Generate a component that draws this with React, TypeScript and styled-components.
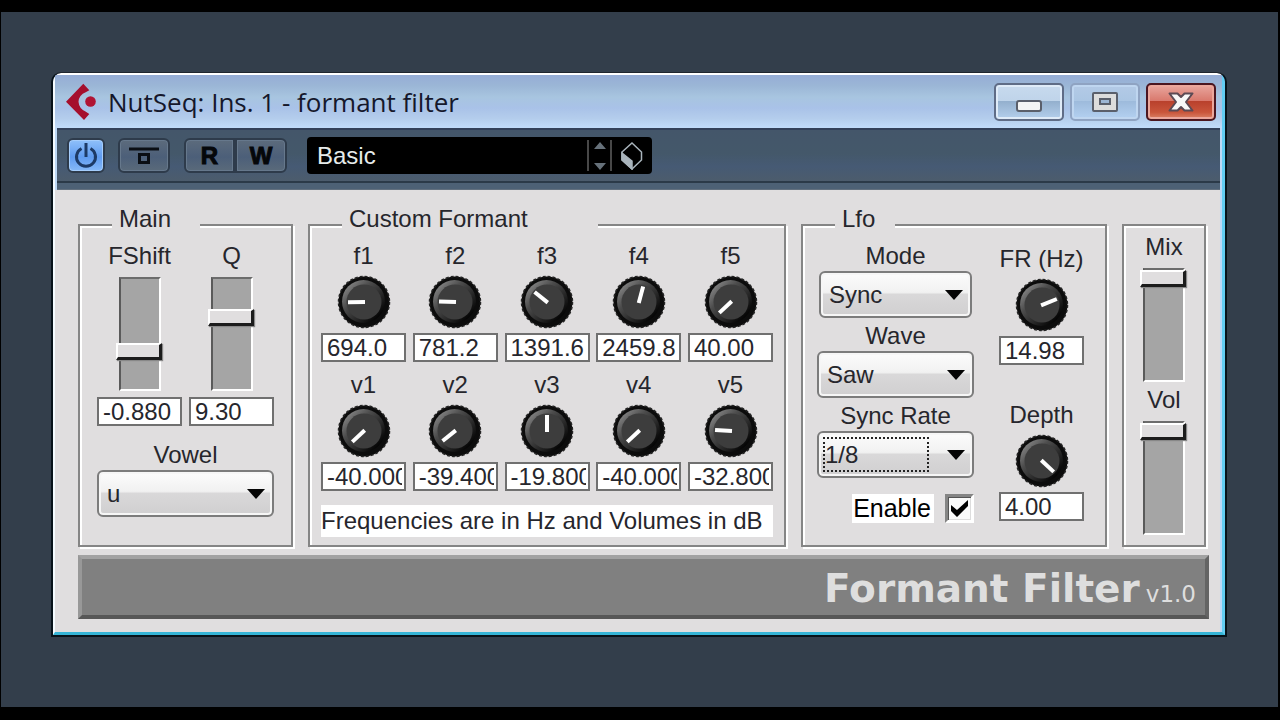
import React, { useId, useState } from "react";
import styled, { createGlobalStyle, css } from "styled-components";

const face = "#e0dedf";
const ink = "#26262c";
const sans = `"Liberation Sans", Arial, sans-serif`;

const GlobalStyle = createGlobalStyle`
  * { box-sizing: border-box; }
  body { margin: 0; background: #000; font-family: ${sans}; font-size: 24px; color: ${ink}; }
  button, input, select { font: inherit; color: inherit; }
`;

const Desktop = styled.main`
  min-height: 100vh;
  padding: 60px 51px 24px 50px;
  border: solid #000;
  border-width: 12px 2px 13px 1px;
  background: #333e4b;
`;

const Window = styled.section`
  border: 2px solid #07121a;
  border-top: 1px solid #20262e;
  border-radius: 10px 10px 0 0;
  overflow: hidden;
`;

const Frame = styled.div`
  padding: 0 2px;
  border: solid;
  border-width: 2px 3px 3px 2px;
  border-color: #fff #62cdf3 #35b4d6 #f4fbff;
  border-radius: 8px 8px 0 0;
  background: #bcd8f6;
`;

const TitleBar = styled.header`
  display: flex;
  align-items: center;
  height: 53px;
  margin: 0 -2px;
  padding: 0 6px 0 9px;
  background: linear-gradient(#96add6 0, #9bb6d6 20%, #a8c5e0 42%, #a9c2e8 62%, #b4cdec 82%, #c1dcfb 100%);
`;

const Title = styled.h1`
  flex: 1;
  margin: 0 0 0 10px;
  font: 400 26px/32px "Open Sans", "Noto Sans", sans-serif;
  color: #15172b;
`;

const WindowButtons = styled.div`
  display: flex;
  gap: 6px;
`;

const looks = {
  normal: css`
    border-color: #5f6c86;
    background: linear-gradient(#c8daee 0, #bfd4ea 46%, #93afcd 47%, #b4cfec 100%);
    box-shadow: inset 0 0 0 2px #dfebf8;
  `,
  dim: css`
    border-color: #8fa3c2;
    background: linear-gradient(#b4cae6 0, #abc6e3 46%, #9dbadb 47%, #b4d1f1 100%);
    box-shadow: inset 0 0 0 2px #bfd6f0;
  `,
  close: css`
    border-color: #4b1620;
    background: linear-gradient(#e9a79f 0, #d9796d 46%, #b8402c 47%, #c9553b 80%, #dc8468 100%);
    box-shadow: inset 0 0 0 2px #eba79c;
  `,
};

const WindowButton = styled.button<{ $look: keyof typeof looks }>`
  display: grid;
  place-items: center;
  width: 70px;
  height: 38px;
  padding: 0;
  border: 2px solid;
  border-radius: 5px;
  ${(p) => looks[p.$look]}
`;

const Toolbar = styled.div`
  display: flex;
  align-items: center;
  height: 62px;
  padding: 0 11px 8px 10px;
  border-top: 2px solid #33415a;
  border-bottom: 1px solid #62707e;
  background: linear-gradient(#44566a 0, #44586a 40%, #465a74 62%, #4c5c6c 51px, #2b3a48 51px, #2b3a48 53px, #4d6175 53px);
`;

const ToolButton = styled.button<{ $width: number; $lit?: boolean; $side?: "left" | "right" }>`
  display: grid;
  place-items: center;
  width: ${(p) => p.$width}px;
  height: 35px;
  padding: 0;
  border: 2px solid #2e3b4b;
  border-radius: ${(p) => (p.$side === "left" ? "6px 0 0 6px" : p.$side === "right" ? "0 6px 6px 0" : "6px")};
  background: ${(p) => (p.$lit ? "linear-gradient(#8fc0fa, #5f9bf0 55%, #86b9f8)" : "linear-gradient(#5c6b7c, #4c5f79 55%, #5a6a7a)")};
  box-shadow: inset 0 0 0 1px ${(p) => (p.$lit ? "#a5cdfc" : "#66788c")};
  font: 700 24px/24px ${sans};
  -webkit-text-stroke: 1px #05070a;
  color: #05070a;
`;

const ToolSet = styled.div`
  display: flex;
  margin: 0 20px 0 14px;
`;

const Bypass = styled(ToolButton)`
  margin-left: 13px;
`;

const Preset = styled.div`
  display: flex;
  align-items: center;
  width: 345px;
  height: 37px;
  padding: 3px 1px 3px 10px;
  border-radius: 4px;
  background: #000;
`;

const PresetName = styled.input`
  flex: 1;
  min-width: 0;
  padding: 0;
  border: 0;
  background: none;
  color: #e6ebea;
`;

const PresetButton = styled.button<{ $width: number }>`
  display: grid;
  place-items: center;
  width: ${(p) => p.$width}px;
  height: 31px;
  padding: 0;
  border: 0;
  border-left: 2px solid #484848;
  background: none;
`;

const Panel = styled.div`
  margin: 0 0 0 -2px;
  padding: 21px 11px 13px 23px;
  background: ${face};
`;

const Groups = styled.div`
  display: grid;
  grid-template-columns: 215fr 478fr 306fr 84fr;
  gap: 15px;
  margin-right: 3px;
`;

const Group = styled.fieldset<{ $bare?: boolean }>`
  min-width: 0;
  margin: ${(p) => (p.$bare ? "13px 0 0" : "0")};
  padding: ${(p) => (p.$bare ? "9px 0 4px" : "5px 0 8px")};
  border: 2px solid #858585;
  box-shadow: 2px 2px 0 #fff, inset 2px 2px 0 #fff;
`;

const Legend = styled.legend<{ $width: number }>`
  width: ${(p) => p.$width}px;
  height: 28px;
  margin-left: 32px;
  padding: 0 0 12px 7px;
  background: ${face};
  line-height: 16px;
  white-space: nowrap;
`;

const Caption = styled.label`
  display: block;
  line-height: 24px;
  text-align: center;
`;

const Stack = styled.div`
  display: flex;
  flex-direction: column;
  align-items: center;
`;

const MainArea = styled.div`
  padding: 0 17px;
`;

const Pair = styled.div`
  display: flex;
  justify-content: center;
  gap: 7px;
  margin-bottom: 17px;
`;

const ValueBox = styled.input`
  display: block;
  width: 85px;
  height: 29px;
  padding: 0 2px 0 4px;
  border: 2px solid #707070;
  border-radius: 0;
  background: #fff;
`;

const Slider = styled.input.attrs({ type: "range", min: 0, max: 100 })`
  appearance: none;
  writing-mode: vertical-lr;
  direction: rtl;
  width: 42px;
  height: 114px;
  margin: 9px 0 6px;
  border: 2px solid;
  border-color: #6c6c6c #fff #fff #5a5a5a;
  background: #a5a5a5;

  &::-webkit-slider-thumb {
    appearance: none;
    width: 46px;
    height: 17px;
    margin-left: -2px;
    border: solid;
    border-width: 2px 3px 3px 2px;
    border-color: #fff #1c1c1c #1c1c1c #fff;
    background: ${face};
    box-shadow: 1px 1px 1px #888;
  }
`;

const KnobFrame = styled.div`
  position: relative;
  width: 54px;
  height: 54px;
  margin: 7px 0 4px;
`;

const KnobInput = styled.input`
  position: absolute;
  inset: 0;
  width: 100%;
  height: 100%;
  margin: 0;
  opacity: 0;
`;

const KnobGrid = styled.div`
  display: grid;
  grid-template-columns: repeat(5, 85px);
  justify-content: space-between;
  row-gap: 11px;
  padding: 0 11px;
`;

const Note = styled.p`
  margin: 14px 11px 0;
  background: #fff;
  line-height: 32px;
  white-space: nowrap;
`;

const LfoArea = styled.div`
  display: flex;
  justify-content: space-between;
  padding: 0 21px 0 14px;
`;

const LfoSelects = styled.div`
  display: flex;
  flex-direction: column;
  gap: 6px;
  width: 157px;
`;

const LfoKnobs = styled.div`
  display: flex;
  flex-direction: column;
  gap: 38px;
  padding-top: 3px;
`;

const SelectFrame = styled.div<{ $inset?: boolean }>`
  position: relative;
  margin: 3px ${(p) => (p.$inset ? 2 : 0)}px 0;
`;

const SelectBox = styled.select<{ $tight?: boolean }>`
  appearance: none;
  display: block;
  width: 100%;
  height: 47px;
  padding: 0 44px 0 ${(p) => (p.$tight ? 6 : 8)}px;
  border: 2px solid #7c7c7c;
  border-radius: 6px;
  background: linear-gradient(#fcfcfc 0, #f1f1f1 45%, #d9d8d9 50%, #d0cfd0 100%);
  box-shadow: inset 0 0 0 2px #f6f6f6;
`;

const Arrow = styled.svg`
  position: absolute;
  top: 18px;
  right: 9px;
  pointer-events: none;
`;

const FocusMark = styled.span`
  position: absolute;
  inset: 6px 45px 6px 6px;
  border: 2px dotted #222;
  pointer-events: none;
`;

const EnableRow = styled.div`
  display: flex;
  justify-content: flex-end;
  align-items: center;
  gap: 11px;
  margin-top: 10px;
`;

const EnableLabel = styled.label`
  padding: 0 3px 0 1px;
  background: #fff;
  font-size: 25px;
  line-height: 29px;
  color: #000;
`;

const TickFrame = styled.span`
  position: relative;
  display: block;
  width: 29px;
  height: 29px;
`;

const Tick = styled.input`
  appearance: none;
  display: block;
  width: 29px;
  height: 29px;
  margin: 0;
  border: 3px solid;
  border-color: #858585 #fff #fff #858585;
  background: #fafafa;
  box-shadow: inset 1px 1px 0 #555, inset -1px -1px 0 #ddd;

  & + svg { display: none; }
  &:checked + svg { display: block; }
`;

const TickMark = styled.svg`
  position: absolute;
  inset: 0;
  pointer-events: none;
`;

const Banner = styled.footer`
  display: flex;
  justify-content: flex-end;
  align-items: baseline;
  gap: 6px;
  height: 64px;
  margin-top: 8px;
  padding: 0 9px;
  border: 4px solid;
  border-color: #a2a2a2 #646464 #575757 #989898;
  background: #808080;
  color: #dedede;
  font: 400 23px/60px "DejaVu Sans", Verdana, sans-serif;
`;

const Product = styled.strong`
  font-size: 39px;
  font-weight: 700;
`;

function Knob({ name, value, angle }: { name: string; value: string; angle: number }) {
  const id = useId();
  const [turn, setTurn] = useState(angle);
  return (
    <Stack>
      <Caption htmlFor={id}>{name}</Caption>
      <KnobFrame>
        <svg width="54" height="54" viewBox="0 0 54 54" aria-hidden="true">
          <defs>
            <linearGradient id={`${id}rim`} x1="0.15" y1="0.15" x2="0.85" y2="0.85">
              <stop offset="0" stopColor="#7c7c7c" />
              <stop offset="0.3" stopColor="#4c4c4c" />
              <stop offset="0.65" stopColor="#2a2a2a" />
              <stop offset="1" stopColor="#050505" />
            </linearGradient>
          </defs>
          <circle cx="27" cy="27" r="25.5" fill="#0c0c0c" />
          <circle cx="27" cy="27" r="25.5" fill="none" stroke="#262626" strokeWidth="1.5" strokeDasharray="3 2" />
          <circle cx="26.5" cy="26.5" r="21.5" fill={`url(#${id}rim)`} />
          <circle cx="27" cy="27" r="17.5" fill="#3d3d3d" />
          <line x1="27" y1="28" x2="27" y2="11" stroke="#fff" strokeWidth="4" transform={`rotate(${turn} 27 27)`} />
        </svg>
        <KnobInput
          id={id}
          type="range"
          min={-135}
          max={135}
          value={turn}
          onChange={(e) => setTurn(Number(e.target.value))}
        />
      </KnobFrame>
      <ValueBox defaultValue={value} aria-label={`${name} value`} />
    </Stack>
  );
}

function Fader({ name, level, value }: { name: string; level: number; value?: string }) {
  const id = useId();
  return (
    <Stack>
      <Caption htmlFor={id}>{name}</Caption>
      <Slider id={id} defaultValue={level} />
      {value && <ValueBox defaultValue={value} aria-label={`${name} value`} />}
    </Stack>
  );
}

function Choice({ name, options, inset, focused }: { name: string; options: string[]; inset?: boolean; focused?: boolean }) {
  const id = useId();
  return (
    <div>
      <Caption htmlFor={id}>{name}</Caption>
      <SelectFrame $inset={inset}>
        <SelectBox id={id} $tight={focused}>
          {options.map((o) => (
            <option key={o}>{o}</option>
          ))}
        </SelectBox>
        {focused && <FocusMark />}
        <Arrow width="18" height="11" viewBox="0 0 18 11" aria-hidden="true">
          <path d="M0 1h18L9 11z" fill="#050505" />
        </Arrow>
      </SelectFrame>
    </div>
  );
}

const formants = [
  { name: "f1", value: "694.0", angle: -91 },
  { name: "f2", value: "781.2", angle: -88 },
  { name: "f3", value: "1391.6", angle: -51 },
  { name: "f4", value: "2459.8", angle: 15 },
  { name: "f5", value: "40.00", angle: -133 },
  { name: "v1", value: "-40.000", angle: -133 },
  { name: "v2", value: "-39.400", angle: -129 },
  { name: "v3", value: "-19.800", angle: 0 },
  { name: "v4", value: "-40.000", angle: -133 },
  { name: "v5", value: "-32.800", angle: -86 },
];

export default function App() {
  return (
    <>
      <GlobalStyle />
      <Desktop>
        <Window>
          <Frame>
            <TitleBar>
              <svg width="34" height="38" viewBox="0 0 34 38" aria-hidden="true">
                <path d="M2 18.7 19.3 .7l6 6.6-3.6 2Q15 12 14.5 18.7 15 25.5 21.5 28.5l3.8 2.5-5.3 6z" fill="#a50f2d" />
                <circle cx="26.5" cy="18.5" r="5.3" fill="#b01434" />
              </svg>
              <Title>NutSeq: Ins. 1 - formant filter</Title>
              <WindowButtons>
                <WindowButton $look="normal" aria-label="Minimize">
                  <svg width="26" height="24" viewBox="0 0 26 24">
                    <rect x="1" y="11" width="24" height="10" rx="2" fill="#f4f4f4" stroke="#5a5f6b" strokeWidth="2" />
                  </svg>
                </WindowButton>
                <WindowButton $look="dim" aria-label="Maximize">
                  <svg width="26" height="20" viewBox="0 0 26 20">
                    <rect x="1" y="1" width="24" height="18" rx="1" fill="#dcdcdc" stroke="#5a5f6b" strokeWidth="2" />
                    <rect x="8" y="7" width="10" height="5" fill="#9db6d4" stroke="#5a5f6b" strokeWidth="2" />
                  </svg>
                </WindowButton>
                <WindowButton $look="close" aria-label="Close">
                  <svg width="26" height="20" viewBox="0 0 26 20">
                    <path
                      d="M1.5 1.5h8L13 5l3.500-3.500h8L18 10l6.500 8.500h-8L13 15l-3.500 3.500h-8L8 10z"
                      fill="#f8f8f8"
                      stroke="#5c4a54"
                      strokeWidth="2"
                      strokeLinejoin="round"
                    />
                  </svg>
                </WindowButton>
              </WindowButtons>
            </TitleBar>

            <Toolbar>
              <ToolButton $width={38} $lit aria-label="Power">
                <svg width="24" height="28" viewBox="0 0 24 28" fill="none" stroke="#1d3a66" strokeWidth="3">
                  <path d="M7.5 6.5a9.500 9.500 0 1 0 9 0M12 1v14" />
                </svg>
              </ToolButton>
              <Bypass $width={52} aria-label="Bypass">
                <svg width="30" height="18" viewBox="0 0 30 18" fill="none" stroke="#0a0e14">
                  <path d="M0 2h30" strokeWidth="3" />
                  <rect x="10.5" y="7.5" width="9" height="8" strokeWidth="3" />
                </svg>
              </Bypass>
              <ToolSet>
                <ToolButton $width={51} $side="left">R</ToolButton>
                <ToolButton $width={52} $side="right">W</ToolButton>
              </ToolSet>
              <Preset>
                <PresetName defaultValue="Basic" aria-label="Preset" />
                <PresetButton $width={23} aria-label="Previous or next preset">
                  <svg width="12" height="28" viewBox="0 0 12 28" fill="#66717a">
                    <path d="M0 7 6 0l6 7zM0 21h12l-6 7z" />
                  </svg>
                </PresetButton>
                <PresetButton $width={41} aria-label="Preset management">
                  <svg width="22" height="28" viewBox="0 0 22 28" fill="none" stroke="#a9b4bc" strokeWidth="1.5">
                    <path d="M11 1 20.5 10v8L11 27 1 18v-8z" />
                    <path d="M1 11 11 19v8L1 18z" fill="#a9b4bc" />
                  </svg>
                </PresetButton>
              </Preset>
            </Toolbar>

            <Panel>
              <Groups>
                <Group>
                  <Legend $width={88}>Main</Legend>
                  <MainArea>
                    <Pair>
                      <Fader name="FShift" level={31} value="-0.880" />
                      <Fader name="Q" level={68} value="9.30" />
                    </Pair>
                    <Choice name="Vowel" options={["u", "a", "e", "i", "o"]} />
                  </MainArea>
                </Group>

                <Group>
                  <Legend $width={256}>Custom Formant</Legend>
                  <KnobGrid>
                    {formants.map((f) => (
                      <Knob key={f.name} {...f} />
                    ))}
                  </KnobGrid>
                  <Note>Frequencies are in Hz and Volumes in dB</Note>
                </Group>

                <Group>
                  <Legend $width={60}>Lfo</Legend>
                  <LfoArea>
                    <LfoSelects>
                      <Choice name="Mode" options={["Sync", "Free"]} inset />
                      <Choice name="Wave" options={["Saw", "Sine", "Square"]} />
                      <Choice name="Sync Rate" options={["1/8", "1/4", "1/2"]} focused />
                      <EnableRow>
                        <EnableLabel htmlFor="lfo-enable">Enable</EnableLabel>
                        <TickFrame>
                          <Tick id="lfo-enable" type="checkbox" defaultChecked />
                          <TickMark width="29" height="29" viewBox="0 0 29 29" aria-hidden="true">
                            <path d="M6 11v6l6 6L23 12V6L12 16z" fill="#000" />
                          </TickMark>
                        </TickFrame>
                      </EnableRow>
                    </LfoSelects>
                    <LfoKnobs>
                      <Knob name="FR (Hz)" value="14.98" angle={68} />
                      <Knob name="Depth" value="4.00" angle={133} />
                    </LfoKnobs>
                  </LfoArea>
                </Group>

                <Group $bare aria-label="Output">
                  <Fader name="Mix" level={100} />
                  <Fader name="Vol" level={100} />
                </Group>
              </Groups>

              <Banner>
                <Product>Formant Filter</Product>
                <span>v1.0</span>
              </Banner>
            </Panel>
          </Frame>
        </Window>
      </Desktop>
    </>
  );
}
